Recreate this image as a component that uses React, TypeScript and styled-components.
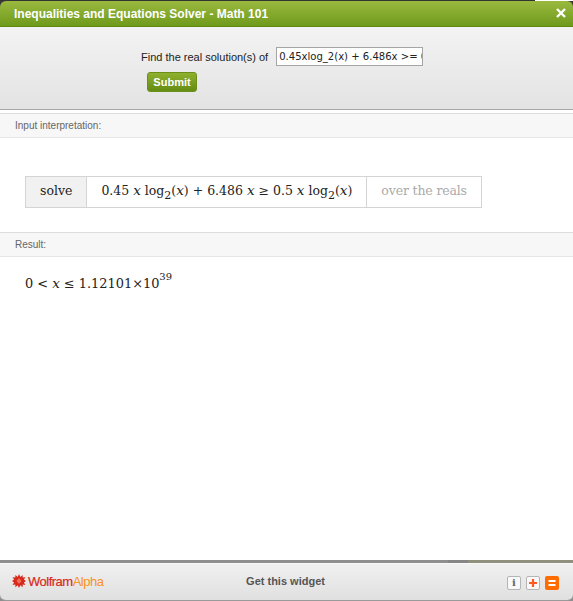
import React from 'react';
import styled, { createGlobalStyle } from 'styled-components';

const Global = createGlobalStyle`
  html, body { margin: 0; padding: 0; background: #fff; }
  body { font-family: "Liberation Sans", Arial, sans-serif; }
`;

const Widget = styled.div`
  width: 573px;
  height: 601px;
  display: flex;
  flex-direction: column;
  overflow: hidden;
  background: linear-gradient(#3a3a3a 50%, #8e8e8e 50%);
`;

const TopStrip = styled.div`
  height: 1px;
  flex: none;
  background: linear-gradient(90deg, #333 535px, #fff 535px);
`;

const TitleBar = styled.div`
  height: 25px;
  flex: none;
  display: flex;
  align-items: center;
  justify-content: space-between;
  padding: 0 6px 0 14px;
  border-radius: 6px 6px 0 0;
  border-bottom: 1px solid #5f8a10;
  background: linear-gradient(#9ab93f, #6f9a1c);
  color: #fff;
  font-size: 12px;
  font-weight: bold;
`;

const CloseIcon = styled.svg`
  width: 12px;
  height: 12px;
  margin-bottom: 1px;
`;

const FormPanel = styled.div`
  height: 83px;
  flex: none;
  box-sizing: border-box;
  background: linear-gradient(#f3f3f3, #e3e3e3);
  border-bottom: 1px solid #a8a8a8;
  padding: 20px 0 0 141px;
`;

const QueryRow = styled.div`
  display: flex;
  align-items: center;
  gap: 8px;
  font-size: 11px;
  color: #222;
`;

const QueryField = styled.div`
  width: 147px;
  height: 19px;
  box-sizing: border-box;
  border: 1px solid #a5a5a5;
  padding: 0 1px 0 2px;
  overflow: hidden;
  white-space: pre;
  background: #fff;
  color: #222;
  font-family: "DejaVu Sans", sans-serif;
  font-size: 10.05px;
  line-height: 17px;
`;

const SubmitButton = styled.button`
  display: block;
  width: 50px;
  height: 20px;
  margin: 6px 0 0 6px;
  padding: 0;
  border: 1px solid #6b8f1a;
  border-radius: 3px;
  background: linear-gradient(#8fb02f, #648d12);
  color: #fff;
  font-family: inherit;
  font-size: 11px;
  font-weight: bold;
`;

const Body = styled.div`
  flex: 1;
  background: #fff;
  display: flex;
  flex-direction: column;
`;

const PodHeader = styled.div<{ $first?: boolean }>`
  height: 23px;
  flex: none;
  margin-top: ${p => (p.$first ? '3px' : '0')};
  display: flex;
  align-items: center;
  padding-left: 15px;
  background: #f7f7f7;
  border-top: 1px solid #dcdcdc;
  border-bottom: 1px solid #e6e6e6;
  color: #666;
  font-size: 10px;
`;

const InterpretationPod = styled.div`
  height: 94px;
  flex: none;
  padding: 38px 0 0 25px;
  box-sizing: border-box;
`;

const InterpretationTable = styled.div`
  display: inline-flex;
  height: 32px;
  box-sizing: border-box;
  border: 1px solid #d4d4d4;
  font-family: "DejaVu Serif", serif;
  font-size: 12.5px;
  color: #222;
`;

const Cell = styled.div<{ $tone?: 'label' | 'muted' }>`
  display: flex;
  align-items: center;
  justify-content: center;
  padding: 0 14px 4px;
  white-space: pre;
  letter-spacing: ${p => (p.$tone === 'muted' ? '-0.15px' : '0')};
  background: ${p => (p.$tone === 'label' ? '#f1f1f1' : '#fff')};
  color: ${p => (p.$tone === 'muted' ? '#aaa' : '#222')};
  & + & { border-left: 1px solid #d4d4d4; }
`;

const CellText = styled.span``;

const Var = styled.i`
  font-style: italic;
  font-size: 13.5px;
  line-height: 0;
`;

const Sub = styled.span`
  font-size: 11px;
  line-height: 0;
  vertical-align: -4px;
`;

const Sup = styled.span`
  font-size: 10px;
  line-height: 0;
  vertical-align: 8px;
`;

const ResultPod = styled.div`
  flex: 1;
  padding: 19px 0 0 25px;
  font-family: "DejaVu Serif", serif;
  font-size: 12.9px;
  color: #222;
`;

const FooterBar = styled.div`
  height: 3px;
  flex: none;
  background: linear-gradient(90deg, #8e8e8e 448px, #858585 448px, #858585 468px, #90907f 468px);
`;

const Footer = styled.div`
  height: 34px;
  flex: none;
  display: grid;
  grid-template-columns: 1fr auto 1fr;
  align-items: center;
  padding: 0 14px 2px 12px;
  border-top: 1px solid #f8f8f8;
  border-bottom: 1px solid #9a9a9a;
  border-radius: 0 0 6px 6px;
  background: linear-gradient(#f0f0f0, #e0e0e0);
`;

const Brand = styled.div`
  display: flex;
  align-items: center;
  gap: 2px;
  font-size: 13px;
  letter-spacing: -0.5px;
  color: #d9281c;
  -webkit-text-stroke: 0.2px #d9281c;
`;

const BrandAccent = styled.span`
  color: #f7931e;
  -webkit-text-stroke: 0;
`;

const GetWidget = styled.div`
  font-size: 11px;
  font-weight: bold;
  color: #555;
`;

const FooterIcons = styled.div`
  display: flex;
  align-items: center;
  justify-content: flex-end;
  gap: 5px;
  padding-top: 3px;
`;

const IconTile = styled.div<{ $solid?: boolean }>`
  width: 14px;
  height: 14px;
  box-sizing: border-box;
  display: flex;
  align-items: center;
  justify-content: center;
  border-radius: 2px;
  border: ${p => (p.$solid ? '0' : '1px solid #b5b5b5')};
  background: ${p => (p.$solid ? '#ff6c00' : '#f8f8f8')};
  color: #666;
  font-family: "DejaVu Serif", serif;
  font-size: 10px;
  font-weight: bold;
`;

export default function App() {
  return (
    <>
      <Global />
      <Widget>
        <TopStrip />
        <TitleBar>
          <span>Inequalities and Equations Solver - Math 101</span>
          <CloseIcon viewBox="0 0 12 12">
            <path d="M2 2 L10 10 M10 2 L2 10" stroke="#fff" strokeWidth="2.4" />
          </CloseIcon>
        </TitleBar>
        <FormPanel>
          <QueryRow>
            <span>Find the real solution(s) of</span>
            <QueryField role="textbox">0.45xlog_2(x) + 6.486x &gt;= 0.5xlog_2(x)</QueryField>
          </QueryRow>
          <SubmitButton>Submit</SubmitButton>
        </FormPanel>
        <Body>
          <PodHeader $first>Input interpretation:</PodHeader>
          <InterpretationPod>
            <InterpretationTable>
              <Cell $tone="label">solve</Cell>
              <Cell>
                <CellText>
                  0.45 <Var>x</Var> log<Sub>2</Sub>(<Var>x</Var>) + 6.486 <Var>x</Var> ≥ 0.5 <Var>x</Var> log<Sub>2</Sub>(<Var>x</Var>)
                </CellText>
              </Cell>
              <Cell $tone="muted">over the reals</Cell>
            </InterpretationTable>
          </InterpretationPod>
          <PodHeader>Result:</PodHeader>
          <ResultPod>
            0 &lt; <Var>x</Var> ≤ 1.12101×10<Sup>39</Sup>
          </ResultPod>
        </Body>
        <FooterBar />
        <Footer>
          <Brand>
            <svg width="14" height="14" viewBox="0 0 14 14">
              <path
                d="M7 0 L8.3 3 L10.6 .9 L10.7 3.6 L13.5 3.2 L11.9 5.6 L14 7 L11.9 8.5 L13.5 10.9 L10.7 10.5 L10.6 13.2 L8.3 11.2 L7 14 L5.7 11.2 L3.4 13.2 L3.3 10.5 L.5 10.9 L2.1 8.5 L0 7 L2.1 5.6 L.5 3.2 L3.3 3.6 L3.4 .9 L5.7 3 Z"
                fill="#d9281c"
              />
              <path d="M7 4 L9.5 7 L7 10 L4.5 7 Z" fill="#f0705a" />
            </svg>
            <span>
              Wolfram<BrandAccent>Alpha</BrandAccent>
            </span>
          </Brand>
          <GetWidget>Get this widget</GetWidget>
          <FooterIcons>
            <IconTile>i</IconTile>
            <IconTile>
              <svg width="10" height="10" viewBox="0 0 10 10">
                <path d="M5 1 V9 M1 5 H9" stroke="#ff5a1f" strokeWidth="2.2" />
              </svg>
            </IconTile>
            <IconTile $solid>
              <svg width="10" height="10" viewBox="0 0 10 10">
                <path d="M1.5 3 H8.5 M1.5 7 H8.5" stroke="#fff" strokeWidth="2" />
              </svg>
            </IconTile>
          </FooterIcons>
        </Footer>
      </Widget>
    </>
  );
}
